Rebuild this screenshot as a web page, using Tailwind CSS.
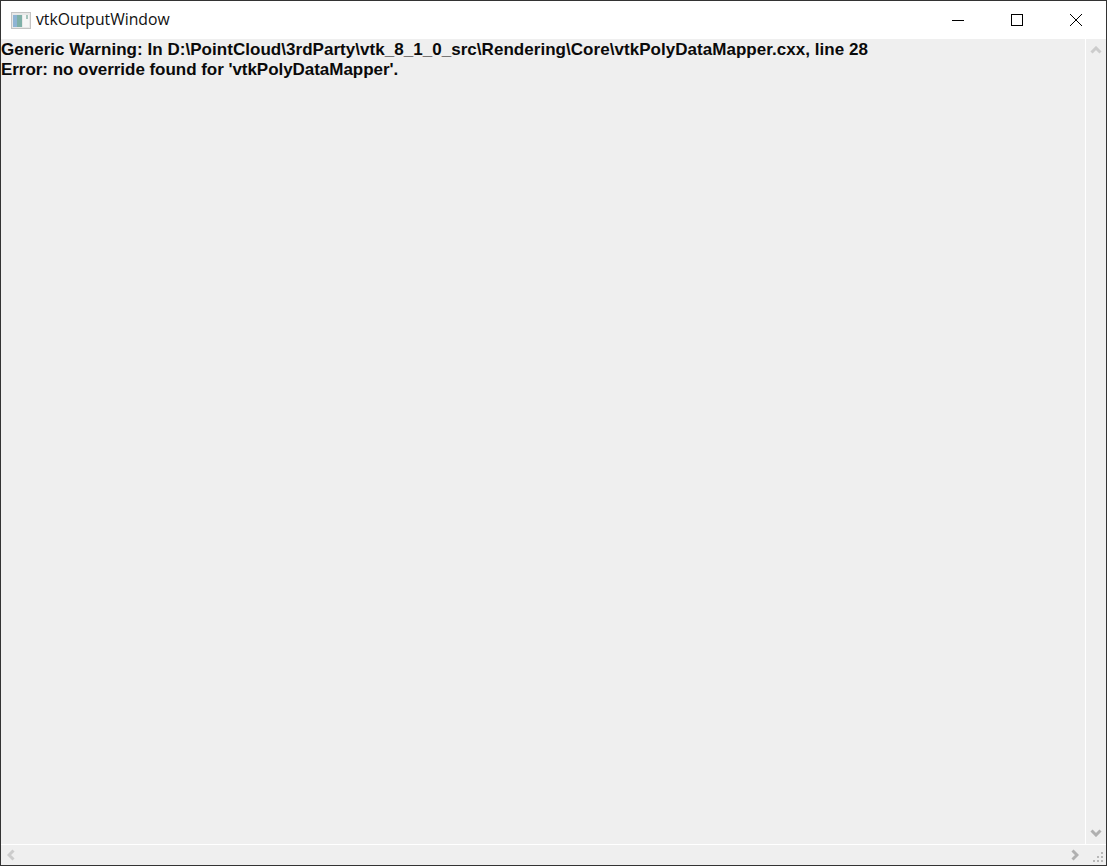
<!DOCTYPE html>
<html lang="en">
<head>
  <meta charset="UTF-8" />
  <title>vtkOutputWindow</title>
  <script src="https://cdn.jsdelivr.net/npm/@tailwindcss/browser@4"></script>
</head>
<body class="h-[866px] w-[1108px] overflow-hidden bg-white">
  <div class="flex h-[866px] w-[1107px] flex-col border border-[#333333] bg-white">
    <!-- title bar -->
    <div class="flex h-[38px] shrink-0 items-center bg-white">
      <svg class="ml-[10px] h-[17px] w-[20px]" viewBox="0 0 20 17">
        <rect x="0.5" y="0.5" width="19" height="16" fill="#e8e8e8" stroke="#c4c4c4" />
        <rect x="2" y="3" width="9" height="12" fill="#7fb0a8" />
        <rect x="2" y="3" width="4" height="12" fill="#8fb4d4" />
        <rect x="12" y="3" width="6" height="12" fill="#f6f6f6" />
        <rect x="15" y="3" width="2" height="4" fill="#a8c4bc" />
      </svg>
      <span class="ml-[5px] font-['Open_Sans'] text-[15.75px] text-[#111111]">vtkOutputWindow</span>
      <div class="ml-auto mr-px flex h-full items-center">
        <div class="flex h-full w-[59px] items-center justify-center">
          <svg class="h-[12px] w-[12px]" viewBox="0 0 12 12"><path d="M0 6.5H12" stroke="#000" fill="none" /></svg>
        </div>
        <div class="flex h-full w-[59px] items-center justify-center">
          <svg class="h-[12px] w-[12px]" viewBox="0 0 12 12"><rect x="0.5" y="0.5" width="11" height="11" stroke="#000" fill="none" /></svg>
        </div>
        <div class="flex h-full w-[59px] items-center justify-center">
          <svg class="h-[12px] w-[12px]" viewBox="0 0 12 12"><path d="M0 0L12 12M12 0L0 12" stroke="#000" fill="none" /></svg>
        </div>
      </div>
    </div>
    <!-- client area -->
    <div class="flex min-h-0 flex-1">
      <div class="min-w-0 flex-1 overflow-hidden bg-[#efefef] pt-px font-['Liberation_Sans'] text-[17px] leading-[20px] font-bold whitespace-nowrap text-[#0a0a0a]">
        <p class="tracking-[0.04px]">Generic Warning: In D:\PointCloud\3rdParty\vtk_8_1_0_src\Rendering\Core\vtkPolyDataMapper.cxx, line 28</p>
        <p class="tracking-[-0.04px]">Error: no override found for 'vtkPolyDataMapper'.</p>
      </div>
      <!-- vertical scrollbar -->
      <div class="flex w-[21px] shrink-0 flex-col items-center justify-between border-l border-white bg-[#efefef] py-[7px]">
        <svg class="h-[8px] w-[12px]" viewBox="0 0 12 8"><path d="M1.5 6.5L6 2L10.5 6.5" stroke="#cccccc" stroke-width="3" fill="none" /></svg>
        <svg class="h-[8px] w-[12px]" viewBox="0 0 12 8"><path d="M1.5 1.5L6 6L10.5 1.5" stroke="#b0b0b0" stroke-width="3" fill="none" /></svg>
      </div>
    </div>
    <!-- horizontal scrollbar -->
    <div class="flex h-[21px] shrink-0 items-center border-t border-white bg-[#efefef]">
      <svg class="ml-[6px] h-[12px] w-[8px]" viewBox="0 0 8 12"><path d="M6.5 1.5L2 6L6.5 10.5" stroke="#cccccc" stroke-width="3" fill="none" /></svg>
      <svg class="ml-auto mr-[13px] h-[12px] w-[8px]" viewBox="0 0 8 12"><path d="M1.5 1.5L6 6L1.5 10.5" stroke="#b0b0b0" stroke-width="3" fill="none" /></svg>
      <svg class="mr-[2px] mt-[6px] h-[12px] w-[12px]" viewBox="0 0 12 12" fill="#b8b8b8">
        <rect x="9" y="0" width="2" height="2" />
        <rect x="5" y="4" width="2" height="2" /><rect x="9" y="4" width="2" height="2" />
        <rect x="1" y="8" width="2" height="2" /><rect x="5" y="8" width="2" height="2" /><rect x="9" y="8" width="2" height="2" />
      </svg>
    </div>
  </div>
</body>
</html>
